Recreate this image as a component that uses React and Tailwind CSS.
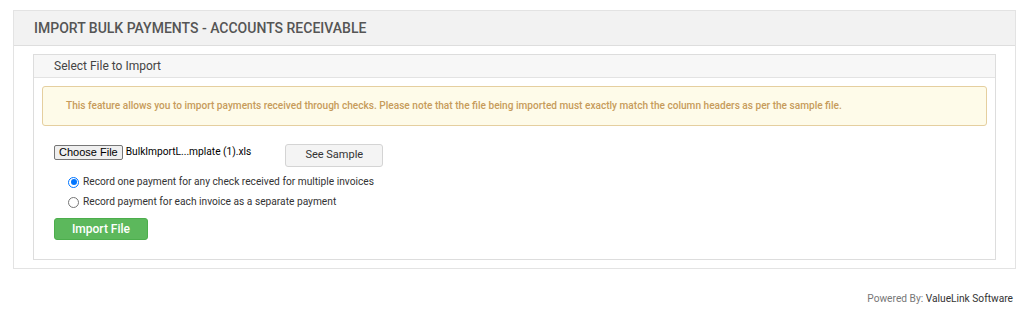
export default function App() {
  const roboto = { fontFamily: "Roboto, 'Liberation Sans', sans-serif" };
  const arial = { fontFamily: "'Liberation Sans', Arial, sans-serif" };
  return (
    <div className="bg-white w-[1024px] h-[314px] overflow-hidden" style={roboto}>
      <div className="ml-[13px] mr-[8px] mt-[10px] border border-[#e3e3e3] bg-white">
        <div className="h-[35px] bg-[#f2f2f2] border-b border-[#dedede] flex items-center pl-[20px]">
          <span className="text-[14px] font-medium text-[#555]">IMPORT BULK PAYMENTS - ACCOUNTS RECEIVABLE</span>
        </div>
        <div className="px-[19px] py-[8px]">
          <div className="border border-[#dddddd]">
            <div className="h-[23px] bg-[#f7f7f7] border-b border-[#e3e3e3] flex items-center pl-[20px]">
              <span className="text-[12px] text-[#444]">Select File to Import</span>
            </div>
            <div className="pt-[8px] pl-[8px] pr-[8px] pb-[19px]">
              <div className="h-[40px] rounded-[3px] border border-[#e5cf9f] bg-[#fefbe9] flex items-center pl-[23px]">
                <span className="text-[10.1px] font-medium text-[#c79b5b]">This feature allows you to import payments received through checks. Please note that the file being imported must exactly match the column headers as per the sample file.</span>
              </div>
              <div className="pl-[12px] mt-[18px]">
                <div className="flex items-start">
                  <div className="flex items-center mt-[1px]">
                    <span className="h-[15px] px-[4px] flex items-center text-[11px] text-black bg-[#efefef] border border-[#767676] rounded-[2px] leading-none" style={arial}>Choose File</span>
                    <span className="ml-[3px] text-[10.2px] text-black leading-none">BulkImportL...mplate (1).xls</span>
                  </div>
                  <button className="ml-[34px] w-[98px] h-[23px] bg-[#f4f4f4] border border-[#d4d4d4] rounded-[3px] text-[11px] text-[#333]">See Sample</button>
                </div>
                <div className="pl-[14px] mt-[8px] flex flex-col gap-[6px]">
                  <label className="flex items-center h-[14px]">
                    <span className="w-[11px] h-[11px] rounded-full border border-[#0075ff] flex items-center justify-center">
                      <span className="w-[6px] h-[6px] rounded-full bg-[#0075ff]"></span>
                    </span>
                    <span className="ml-[4px] text-[10.2px] text-[#333]">Record one payment for any check received for multiple invoices</span>
                  </label>
                  <label className="flex items-center h-[14px]">
                    <span className="w-[11px] h-[11px] rounded-full border border-[#767676]"></span>
                    <span className="ml-[4px] text-[10.2px] text-[#333]">Record payment for each invoice as a separate payment</span>
                  </label>
                </div>
                <button className="mt-[9px] w-[94px] h-[22px] bg-[#5cb85c] rounded-[3px] text-white text-[12px] font-medium border border-[#4cae4c]">Import File</button>
              </div>
            </div>
          </div>
        </div>
      </div>
      <div className="mr-[11px] mt-[25px] text-right text-[10.2px] leading-none">
        <span className="text-[#777]">Powered By: </span>
        <span className="text-[#333]">ValueLink Software</span>
      </div>
    </div>
  );
}
